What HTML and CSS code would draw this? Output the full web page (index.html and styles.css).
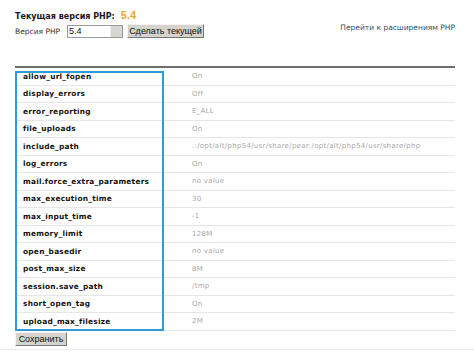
FILE: index.html
```html
<!DOCTYPE html>
<html lang="ru">
<head>
<meta charset="utf-8">
<link rel="stylesheet" href="styles.css">
</head>
<body>
<div class="page">
  <div class="head">
    <div class="head-left">
      <div class="current"><span class="current-label">Текущая версия PHP:</span><span class="current-ver">5.4</span></div>
      <div class="controls">
        <span class="ver-label">Версия PHP</span>
        <span class="select"><span class="select-val">5.4</span><span class="select-btn"></span></span>
        <button class="btn btn-make">Сделать текущей</button>
      </div>
    </div>
    <a class="ext-link" href="#">Перейти к расширениям PHP</a>
  </div>
  <div class="opts">
    <div class="row"><span class="name">allow_url_fopen</span><span class="val">On</span></div>
    <div class="row"><span class="name">display_errors</span><span class="val">Off</span></div>
    <div class="row"><span class="name">error_reporting</span><span class="val">E_ALL</span></div>
    <div class="row"><span class="name">file_uploads</span><span class="val">On</span></div>
    <div class="row"><span class="name">include_path</span><span class="val">.:/opt/alt/php54/usr/share/pear:/opt/alt/php54/usr/share/php</span></div>
    <div class="row"><span class="name">log_errors</span><span class="val">On</span></div>
    <div class="row"><span class="name">mail.force_extra_parameters</span><span class="val">no value</span></div>
    <div class="row"><span class="name">max_execution_time</span><span class="val">30</span></div>
    <div class="row"><span class="name">max_input_time</span><span class="val">-1</span></div>
    <div class="row"><span class="name">memory_limit</span><span class="val">128M</span></div>
    <div class="row"><span class="name">open_basedir</span><span class="val">no value</span></div>
    <div class="row"><span class="name">post_max_size</span><span class="val">8M</span></div>
    <div class="row"><span class="name">session.save_path</span><span class="val">/tmp</span></div>
    <div class="row"><span class="name">short_open_tag</span><span class="val">On</span></div>
    <div class="row"><span class="name">upload_max_filesize</span><span class="val">2M</span></div>
    <div class="highlight"></div>
  </div>
  <button class="btn btn-save">Сохранить</button>
</div>
<div class="bottom-line"></div>
</body>
</html>
```
FILE: styles.css
```css
html, body {
  margin: 0;
  padding: 0;
  background: #fff;
}
body {
  font-family: "DejaVu Sans", Verdana, sans-serif;
  color: #222;
}
.page {
  padding: 9px 19px 0 15px;
}
.head {
  display: flex;
  justify-content: space-between;
  align-items: flex-start;
  height: 57px;
}
.current {
  display: flex;
  align-items: baseline;
  height: 14px;
}
.current-label {
  font-weight: bold;
  font-size: 8px;
  color: #1a1a1a;
}
.current-ver {
  font-family: "Liberation Sans", Arial, sans-serif;
  font-size: 11px;
  font-weight: bold;
  color: #f0a332;
  margin-left: 6px;
}
.controls {
  display: flex;
  align-items: center;
  margin-top: 1px;
}
.ver-label {
  font-size: 7.5px;
  color: #333;
  width: 52px;
}
.select {
  display: flex;
  width: 56px;
  height: 13px;
  box-sizing: border-box;
  border: 1px solid #999;
  background: #fff;
}
.select-val {
  flex: 1;
  font-family: "Liberation Sans", Arial, sans-serif;
  font-size: 9px;
  line-height: 11px;
  padding-left: 1px;
  color: #111;
}
.select-btn {
  width: 11px;
  background: #d8d6d0;
  border-left: 1px solid #eee;
}
.btn {
  font-family: "Liberation Sans", Arial, sans-serif;
  font-size: 9px;
  color: #111;
  background: #d6d3cc;
  border: 1px solid;
  border-color: #f4f4f4 #777 #777 #f4f4f4;
  padding: 0;
  margin: 0;
  box-sizing: border-box;
}
.btn-make {
  margin-left: 4px;
  width: 77px;
  height: 14px;
}
.ext-link {
  font-size: 7.5px;
  color: #2c4f6e;
  text-decoration: none;
  margin-top: 14px;
}
.opts {
  position: relative;
  width: 440px;
  border-top: 2px solid #6e6e6e;
}
.row {
  display: flex;
  align-items: center;
  height: 17.5px;
  box-sizing: border-box;
  border-bottom: 1px solid #e6e6e6;
}
.name {
  width: 169px;
  padding-left: 8px;
  box-sizing: border-box;
  font-weight: bold;
  font-size: 7.4px;
  color: #111;
  letter-spacing: 0.25px;
}
.val {
  padding-left: 8px;
  font-size: 7px;
  color: #a8a8a8;
  letter-spacing: 0.3px;
}
.highlight {
  position: absolute;
  left: 0;
  top: 3px;
  width: 149px;
  height: 260px;
  box-sizing: border-box;
  border: 2px solid #2f9ad8;
  pointer-events: none;
}
.btn-save {
  margin-top: 1px;
  width: 52px;
  height: 14px;
  display: block;
}
.bottom-line {
  margin-top: 3px;
  height: 1px;
  background: #ececec;
}
```
